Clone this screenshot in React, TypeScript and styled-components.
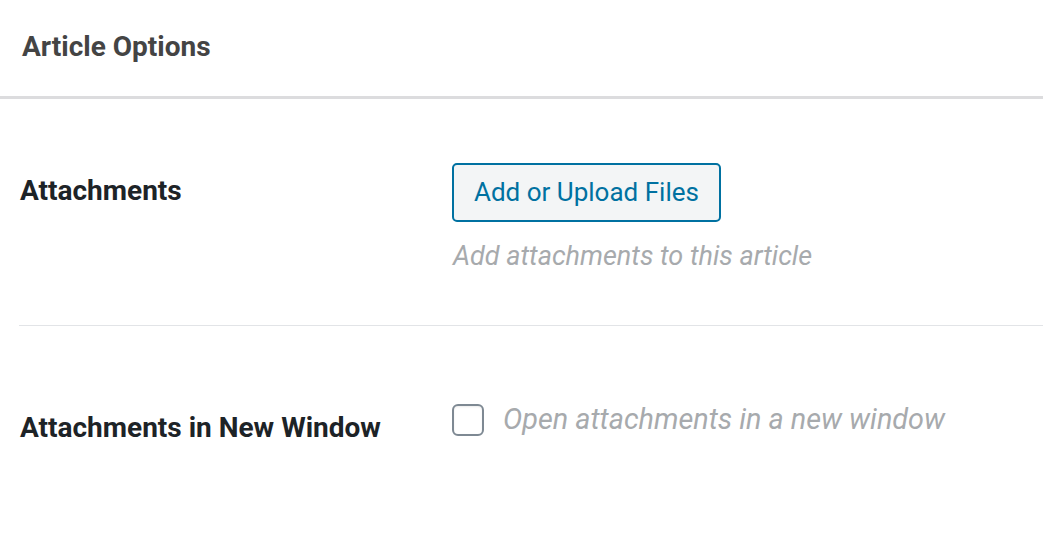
import React from "react";
import styled, { createGlobalStyle } from "styled-components";

const Global = createGlobalStyle`
  html, body { margin: 0; padding: 0; background: #fff; }
  body { font-family: Roboto, "Noto Sans", "Liberation Sans", sans-serif; }
  * { box-sizing: border-box; }
`;

const Page = styled.div`
  width: 1043px;
  height: 547px;
  overflow: hidden;
  background: #fff;
`;

const Header = styled.header`
  height: 99px;
  padding: 27px 22px 0;
  border-bottom: 3px solid #dcdcde;
`;

const Title = styled.h2`
  margin: 0;
  font-size: 28px;
  line-height: 40px;
  font-weight: 700;
  color: #444;
`;

const Row = styled.div<{ $top: number; $bottom: number; $divider?: boolean }>`
  display: grid;
  grid-template-columns: 432px 1fr;
  margin-left: 19px;
  padding-left: 1px;
  padding-top: ${(p) => p.$top}px;
  padding-bottom: ${(p) => p.$bottom}px;
  border-bottom: ${(p) => (p.$divider ? "1px solid #e2e4e7" : "none")};
`;

const Label = styled.div<{ $offset: number }>`
  font-size: 28px;
  line-height: 40px;
  font-weight: 700;
  color: #1d2327;
  padding-top: ${(p) => p.$offset}px;
`;

const Field = styled.div`
  display: flex;
  flex-direction: column;
  align-items: flex-start;
`;

const Button = styled.button`
  height: 59px;
  padding: 0 20px;
  border: 2px solid #0071a1;
  border-radius: 5px;
  background: #f3f5f6;
  color: #0071a1;
  font-family: inherit;
  font-size: 26px;
  line-height: 55px;
  cursor: pointer;
`;

const Hint = styled.p<{ $size: number }>`
  margin: 0;
  font-size: ${(p) => p.$size}px;
  line-height: 40px;
  font-style: italic;
  color: #a7aaad;
`;

const Description = styled(Hint)`
  margin: 14px 0 0 1px;
`;

const CheckRow = styled.label`
  display: flex;
  align-items: center;
  gap: 19px;
  height: 40px;
`;

const Box = styled.span`
  width: 32px;
  height: 32px;
  margin-top: 2px;
  border: 2px solid #7e8993;
  border-radius: 6px;
  background: #fff;
  box-shadow: inset 0 1px 2px rgba(0, 0, 0, 0.08);
  flex: none;
`;

export default function App() {
  return (
    <Page>
      <Global />
      <Header>
        <Title>Article Options</Title>
      </Header>
      <Row $top={64} $bottom={49} $divider>
        <Label $offset={8}>Attachments</Label>
        <Field>
          <Button type="button">Add or Upload Files</Button>
          <Description $size={27}>Add attachments to this article</Description>
        </Field>
      </Row>
      <Row $top={73} $bottom={0}>
        <Label $offset={9}>Attachments in New Window</Label>
        <Field>
          <CheckRow>
            <Box />
            <Hint as="span" $size={28.8}>
              Open attachments in a new window
            </Hint>
          </CheckRow>
        </Field>
      </Row>
    </Page>
  );
}
